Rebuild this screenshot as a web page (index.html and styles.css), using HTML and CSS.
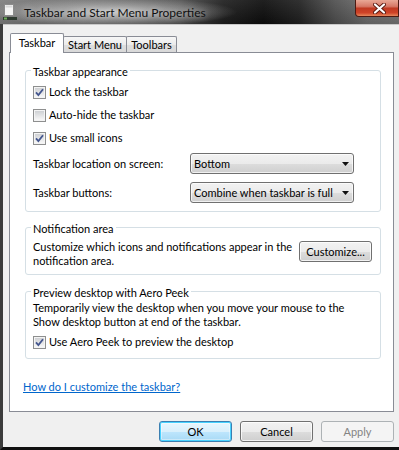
FILE: index.html
```html
<!DOCTYPE html>
<html>
<head>
<meta charset="utf-8">
<link rel="stylesheet" href="styles.css">
</head>
<body>
<div class="window">
  <div class="titlebar">
    <svg class="app-icon" width="14" height="16" viewBox="0 0 14 16">
      <rect x="1.5" y="0.5" width="9" height="11" fill="#f4f4f4" stroke="#8c8c8c"/>
      <rect x="2.5" y="1.5" width="7" height="2" fill="#d8d8d8"/>
      <rect x="0" y="13" width="14" height="3" fill="#2e3a30"/>
      <rect x="1" y="13.5" width="3" height="2" fill="#6fae5a"/>
    </svg>
    <span class="title">Taskbar and Start Menu Properties</span>
    <div class="close">
      <svg width="13" height="11" viewBox="0 0 13 11">
        <path d="M2 1.5 L11 9.5 M11 1.5 L2 9.5" stroke="#5a1a10" stroke-width="4" stroke-linecap="round"/>
        <path d="M2 1.5 L11 9.5 M11 1.5 L2 9.5" stroke="#ffffff" stroke-width="2.2" stroke-linecap="round"/>
      </svg>
    </div>
  </div>
  <div class="client">
    <div class="tabs">
      <div class="tab selected">Taskbar</div>
      <div class="tab tab-start">Start Menu</div>
      <div class="tab tab-tools">Toolbars</div>
    </div>
    <div class="panel">
      <div class="group g-appearance">
        <div class="group-label">Taskbar appearance</div>
        <div class="check-row">
          <span class="cb"><svg width="9" height="9" viewBox="0 0 9 9"><path d="M1 4.3 L3.4 7 L8 1.3" stroke="#44568e" stroke-width="1.8" fill="none"/></svg></span>
          <span>Lock the taskbar</span>
        </div>
        <div class="check-row">
          <span class="cb"></span>
          <span>Auto-hide the taskbar</span>
        </div>
        <div class="check-row">
          <span class="cb"><svg width="9" height="9" viewBox="0 0 9 9"><path d="M1 4.3 L3.4 7 L8 1.3" stroke="#44568e" stroke-width="1.8" fill="none"/></svg></span>
          <span>Use small icons</span>
        </div>
        <div class="select-row">
          <span class="select-label">Taskbar location on screen:</span>
          <div class="dropdown"><span>Bottom</span><svg width="7" height="4" viewBox="0 0 7 4"><path d="M0 0 H7 L3.5 4 Z" fill="#111"/></svg></div>
        </div>
        <div class="select-row second">
          <span class="select-label">Taskbar buttons:</span>
          <div class="dropdown"><span>Combine when taskbar is full</span><svg width="7" height="4" viewBox="0 0 7 4"><path d="M0 0 H7 L3.5 4 Z" fill="#111"/></svg></div>
        </div>
      </div>

      <div class="group g-notify">
        <div class="group-label">Notification area</div>
        <div class="notify-row">
          <p class="desc">Customize which icons and notifications appear in the<br>notification area.</p>
          <div class="btn btn-customize">Customize...</div>
        </div>
      </div>

      <div class="group g-peek">
        <div class="group-label">Preview desktop with Aero Peek</div>
        <p class="desc peek-desc">Temporarily view the desktop when you move your mouse to the<br>Show desktop button at end of the taskbar.</p>
        <div class="check-row peek-check">
          <span class="cb"><svg width="9" height="9" viewBox="0 0 9 9"><path d="M1 4.3 L3.4 7 L8 1.3" stroke="#44568e" stroke-width="1.8" fill="none"/></svg></span>
          <span>Use Aero Peek to preview the desktop</span>
        </div>
      </div>

      <a class="help-link" href="#">How do I customize the taskbar?</a>
    </div>
    <div class="buttons">
      <div class="btn btn-default">OK</div>
      <div class="btn">Cancel</div>
      <div class="btn btn-disabled">Apply</div>
    </div>
  </div>
</div>
</body>
</html>
```

FILE: styles.css
```css
* { box-sizing: border-box; }

html, body {
  margin: 0;
  padding: 0;
}

body {
  width: 399px;
  height: 450px;
  overflow: hidden;
  font-family: Lato, "Liberation Sans", sans-serif;
  font-size: 11px;
  color: #000;
  background: #f0f0f0;
}

.window {
  width: 399px;
  height: 450px;
  border-left: 3px solid #3c3c3c;
  border-bottom: 3px solid #101010;
  background: #f0f0f0;
  display: flex;
  flex-direction: column;
}

.titlebar {
  height: 24px;
  display: flex;
  align-items: center;
  margin-left: -3px;
  background:
    radial-gradient(ellipse 125px 15px at 112px 12px, rgba(210,210,210,0.9), rgba(210,210,210,0) 100%),
    linear-gradient(to bottom, rgba(255,255,255,0.08), rgba(0,0,0,0.12)),
    linear-gradient(to right, #7e7e7e 0%, #6e6e6e 12%, #4c4c4c 45%, #1e1e1e 56%, #0d0d0d 66%, #202020 75%, #4f4f4f 84%, #6c6c6c 92%, #747474 100%);
}

.app-icon {
  margin-left: 3px;
  flex: none;
}

.title {
  margin-left: 7px;
  font-size: 12px;
  color: #101010;
  text-shadow: 0 0 6px rgba(255,255,255,0.6);
  white-space: nowrap;
}

.close {
  margin-left: auto;
  align-self: flex-start;
  width: 44px;
  height: 17px;
  border: 1px solid #4d1a12;
  border-top: none;
  border-radius: 0 0 0 4px;
  background: linear-gradient(to bottom, #e9a896 0%, #d67866 40%, #c03a22 52%, #cf4328 80%, #e6885c 100%);
  display: flex;
  align-items: center;
  justify-content: center;
  padding-left: 4px;
}

.client {
  flex: 1;
  border-top: 1px solid #c9c9c9;
  padding: 8px 5px 0 6px;
  display: flex;
  flex-direction: column;
}

.tabs {
  display: flex;
  align-items: flex-end;
  height: 20px;
  margin-bottom: -1px;
  position: relative;
  z-index: 1;
}

.tab {
  height: 16px;
  margin-bottom: 1px;
  border: 1px solid #898c95;
  border-bottom: none;
  border-radius: 2px 2px 0 0;
  background: linear-gradient(to bottom, #f7f7f7 0%, #ebebeb 50%, #dedede 51%, #d9d9d9 100%);
  display: flex;
  align-items: center;
  justify-content: center;
  line-height: 14px;
  white-space: nowrap;
}

.tab.selected {
  height: 20px;
  margin-bottom: 0;
  margin-left: 1px;
  width: 54px;
  background: #fff;
  padding-bottom: 2px;
  position: relative;
  z-index: 2;
}

.tab-start {
  width: 64px;
  margin-left: -1px;
}

.tab-tools {
  width: 51px;
  margin-left: -1px;
}

.panel {
  width: 385px;
  height: 360px;
  border: 1px solid #898c95;
  background: #fff;
  padding: 0 0 0 15px;
  display: flex;
  flex-direction: column;
}

.group {
  width: 356px;
  border: 1px solid #d5dfe5;
  border-radius: 3px;
  padding: 0 8px 0 7px;
  display: flex;
  flex-direction: column;
}

.group-label {
  align-self: flex-start;
  margin: -6px 0 -2px -2px;
  padding: 0 2px;
  background: #fff;
  line-height: 14px;
  height: 14px;
}

.g-appearance {
  margin-top: 17px;
  padding-bottom: 8px;
  gap: 7px;
}

.check-row {
  display: flex;
  align-items: center;
  height: 16px;
  line-height: 14px;
}

.cb {
  flex: none;
  width: 13px;
  height: 13px;
  border: 1px solid #8e8f8f;
  background: #f4f4f4;
  padding: 1px;
  margin-right: 3px;
  display: flex;
  align-items: center;
  justify-content: center;
  background-image: linear-gradient(to bottom, #cfd1d4, #f7f7f7);
  background-origin: content-box;
  background-clip: content-box;
  box-shadow: inset 0 0 0 1px #f4f4f4;
}

.select-row {
  display: grid;
  grid-template-columns: 157px 164px;
  align-items: center;
  height: 21px;
}

.select-row.second {
  margin-top: 1px;
}

.dropdown {
  height: 21px;
  border: 1px solid #707070;
  border-radius: 3px;
  background: linear-gradient(to bottom, #f2f2f2 0%, #ebebeb 50%, #dddddd 51%, #cfcfcf 100%);
  box-shadow: inset 0 0 0 1px rgba(255,255,255,0.7);
  display: flex;
  align-items: center;
  justify-content: space-between;
  padding: 0 4px 0 3px;
  line-height: 14px;
  white-space: nowrap;
}

.g-notify {
  margin-top: 15px;
  padding-bottom: 6px;
}

.notify-row {
  display: flex;
  align-items: flex-start;
  margin-top: 6px;
}

.desc {
  margin: 0;
  line-height: 14px;
  white-space: nowrap;
}

.btn {
  width: 73px;
  height: 21px;
  border: 1px solid #707070;
  border-radius: 3px;
  background: linear-gradient(to bottom, #f2f2f2 0%, #ebebeb 50%, #dddddd 51%, #cfcfcf 100%);
  box-shadow: inset 0 0 0 1px rgba(255,255,255,0.75);
  display: flex;
  align-items: center;
  justify-content: center;
  line-height: 14px;
  white-space: nowrap;
}

.btn-customize {
  margin-left: auto;
  margin-top: 1px;
  width: 73px;
}

.g-peek {
  margin-top: 16px;
  padding-bottom: 8px;
}

.peek-desc {
  margin-top: 3px;
}

.peek-check {
  margin-top: 5px;
}

.help-link {
  margin: 21px 0 0 -2px;
  align-self: flex-start;
  line-height: 14px;
  color: #0066cc;
  text-decoration: underline;
}

.buttons {
  display: flex;
  justify-content: flex-end;
  gap: 8px;
  margin-top: 9px;
  width: 385px;
}

.btn-default {
  border-color: #3c7fb1;
  background: linear-gradient(to bottom, #eaf6fd 0%, #d9f0fc 50%, #bee6fd 51%, #a7d9f5 100%);
  box-shadow: inset 0 0 0 1px #48d2ff, inset 0 0 0 2px rgba(255,255,255,0.4);
}

.btn-disabled {
  border-color: #adb2b5;
  background: #f4f4f4;
  box-shadow: none;
  color: #838383;
}
```
